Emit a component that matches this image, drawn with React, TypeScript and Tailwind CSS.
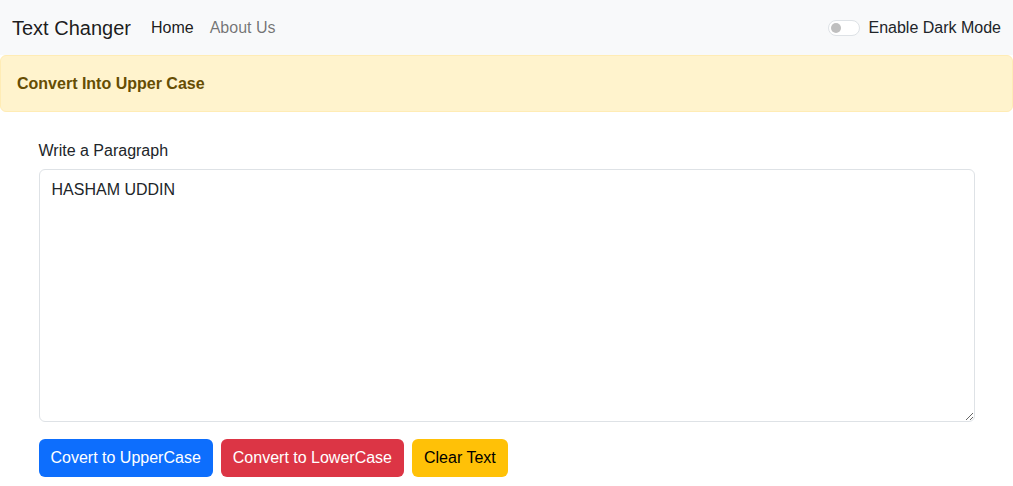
import { useState } from 'react'

export default function App() {
  const [text, setText] = useState('HASHAM UDDIN')
  const [dark, setDark] = useState(false)

  return (
    <div className="min-h-screen bg-white text-[#212529] text-base" style={{ fontFamily: '"Liberation Sans", Arial, sans-serif' }}>
      <nav className="h-[55px] bg-[#f8f9fa] flex items-center px-3">
        <span className="text-xl text-black/90 mr-5">Text Changer</span>
        <a className="text-black/90 pr-2">Home</a>
        <a className="text-black/55 px-2">About Us</a>
        <label className="ml-auto flex items-center gap-2 cursor-pointer">
          <button
            onClick={() => setDark(!dark)}
            className="w-8 h-4 rounded-full border border-[#dee2e6] bg-white flex items-center px-[2px]"
          >
            <span className="w-[10px] h-[10px] rounded-full bg-[#bfbfbf]" />
          </button>
          <span>Enable Dark Mode</span>
        </label>
      </nav>

      <div className="h-[57px] bg-[#fff3cd] border border-[#ffecb5] rounded-md flex items-center px-4">
        <strong className="text-[#664d03]">Convert Into Upper Case</strong>
      </div>

      <div className="w-[936px] mx-auto pt-[27px]">
        <label className="block leading-6 mb-[6px]">Write a Paragraph</label>
        <textarea
          value={text}
          onChange={(e) => setText(e.target.value)}
          className="w-full h-[253px] border border-[#dee2e6] rounded-md px-3 pt-2 pb-[6px] leading-6 focus:outline-none"
        />
        <div className="flex gap-2 mt-[10px]">
          <button className="h-[38px] px-3 rounded-md bg-[#0d6efd] text-white">Covert to UpperCase</button>
          <button className="h-[38px] px-3 rounded-md bg-[#dc3545] text-white">Convert to LowerCase</button>
          <button className="h-[38px] px-3 rounded-md bg-[#ffc107] text-black">Clear Text</button>
        </div>
      </div>
    </div>
  )
}
